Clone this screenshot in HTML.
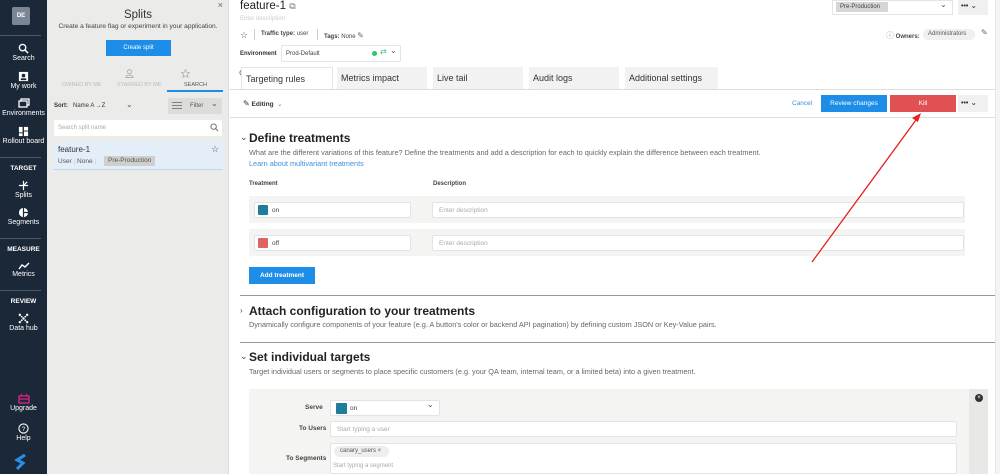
<!DOCTYPE html>
<html><head><meta charset="utf-8"><style>
*{box-sizing:border-box;margin:0;padding:0}
body{width:1000px;height:474px;overflow:hidden;position:relative;font-family:"Liberation Sans",sans-serif;background:#fff;color:#333;white-space:nowrap}
.a{position:absolute}
.nav{left:0;top:0;width:47px;height:474px;background:#1b2838}
.ni{position:absolute;left:0;width:47px;text-align:center;color:#fff;font-size:7px}
.ni svg{display:block;margin:0 auto 1px}
.sec{position:absolute;left:0;width:47px;text-align:center;color:#fff;font-size:6.5px;font-weight:bold}
.hr{position:absolute;left:0;width:41px;height:1px;background:#4a5868}
.panel{left:47px;top:0;width:182px;height:474px;background:#ebebea;border-right:1px solid #ddd}
.tab{position:absolute;top:67px;height:22px;background:#f2f2f2;font-size:9px;padding:6px 4px;color:#333}
.line{position:absolute;left:230px;width:765px;height:1px;background:#ddd}
.btn{position:absolute;color:#fff;font-size:6.5px;text-align:center}
.h2{position:absolute;font-size:12px;font-weight:bold;color:#222}
.desc{position:absolute;font-size:7.3px;color:#666}
.inp{position:absolute;background:#fff;border:1px solid #e3e3e3;border-radius:2px;font-size:6.5px;color:#aaa;padding:0 6px}
.row{position:absolute;left:249px;width:716px;height:27px;background:#f4f4f3}
</style></head><body>
<div class="a nav">
 <div class="a" style="left:12px;top:7px;width:18px;height:18px;background:#7b8694;border-radius:2px;color:#fff;font-size:6px;font-weight:bold;text-align:center;line-height:18px">DE</div>
 <div class="hr" style="top:35px"></div>
 <div class="ni" style="top:43px"><svg width="11" height="11" viewBox="0 0 12 12"><circle cx="5" cy="5" r="3.5" fill="none" stroke="#fff" stroke-width="1.5"/><path d="M7.5 7.5L11 11" stroke="#fff" stroke-width="1.6"/></svg>Search</div>
 <div class="ni" style="top:71px"><svg width="11" height="11" viewBox="0 0 12 12"><rect x="1" y="1" width="10" height="10" fill="#fff"/><circle cx="6" cy="5" r="2" fill="#1b2838"/><rect x="3" y="8" width="6" height="2" fill="#1b2838"/></svg>My work</div>
 <div class="ni" style="top:98px"><svg width="12" height="11" viewBox="0 0 12 11"><rect x="3" y="1" width="8" height="6" fill="none" stroke="#fff" stroke-width="1.3"/><rect x="1" y="3" width="8" height="6" fill="#1b2838" stroke="#fff" stroke-width="1.3"/></svg>Environments</div>
 <div class="ni" style="top:126px"><svg width="11" height="11" viewBox="0 0 12 12"><rect x="1" y="1" width="4" height="6" fill="#fff"/><rect x="6.5" y="1" width="4.5" height="4" fill="#fff"/><rect x="1" y="8" width="4" height="3" fill="#fff"/><rect x="6.5" y="6" width="4.5" height="5" fill="#fff"/></svg>Rollout board</div>
 <div class="hr" style="top:157px"></div>
 <div class="sec" style="top:165px">TARGET</div>
 <div class="ni" style="top:180px"><svg width="11" height="11" viewBox="0 0 12 12"><path d="M1 6H11M6 1V11M6 6L10 2" stroke="#fff" stroke-width="1.3" fill="none"/></svg>Splits</div>
 <div class="ni" style="top:207px"><svg width="11" height="11" viewBox="0 0 12 12"><circle cx="6" cy="6" r="5" fill="#fff"/><path d="M6 1V11M6 6H11" stroke="#1b2838" stroke-width="1.3"/></svg>Segments</div>
 <div class="hr" style="top:238px"></div>
 <div class="sec" style="top:246px">MEASURE</div>
 <div class="ni" style="top:262px"><svg width="12" height="8" viewBox="0 0 12 8"><path d="M1 7L4 3L7 5L11 1" stroke="#fff" stroke-width="1.4" fill="none"/></svg>Metrics</div>
 <div class="hr" style="top:290px"></div>
 <div class="sec" style="top:298px">REVIEW</div>
 <div class="ni" style="top:313px"><svg width="11" height="11" viewBox="0 0 12 12" fill="#fff"><circle cx="2" cy="2" r="1.3"/><circle cx="10" cy="2" r="1.3"/><circle cx="6" cy="6" r="1.3"/><circle cx="2" cy="10" r="1.3"/><circle cx="10" cy="10" r="1.3"/><circle cx="4" cy="4" r="1"/><circle cx="8" cy="8" r="1"/><circle cx="8" cy="4" r="1"/><circle cx="4" cy="8" r="1"/></svg>Data hub</div>
 <div class="ni" style="top:393px"><svg width="12" height="11" viewBox="0 0 12 11"><rect x="1" y="3" width="10" height="7" fill="none" stroke="#e0218a" stroke-width="1.3"/><path d="M1 6H11M4 3L3 1M8 3L9 1" stroke="#e0218a" stroke-width="1.2"/></svg>Upgrade</div>
 <div class="ni" style="top:423px"><svg width="11" height="11" viewBox="0 0 12 12"><circle cx="6" cy="6" r="5" fill="none" stroke="#fff" stroke-width="1.2"/><text x="6" y="8.5" font-size="7" fill="#fff" text-anchor="middle" font-family="Liberation Sans">?</text></svg>Help</div>
 <svg class="a" style="left:14px;top:454px" width="14" height="16" viewBox="0 0 14 16"><path d="M11 1L3 6L9 9L3 15" stroke="#2a8fe8" stroke-width="3" fill="none"/></svg>
</div>
<div class="a panel">
 <div class="a" style="right:5px;top:0;font-size:9px;color:#666">×</div>
 <div class="a" style="left:0;width:182px;top:9px;text-align:center;font-size:11.5px;color:#333">Splits</div>
 <div class="a" style="left:0;width:182px;top:23px;text-align:center;font-size:6.6px;color:#444">Create a feature flag or experiment in your application.</div>
 <div class="btn" style="left:59px;top:40px;width:65px;height:16px;background:#1d8de8;line-height:16px;font-size:6px">Create split</div>
 <svg class="a" style="left:78px;top:69px" width="9" height="9" viewBox="0 0 10 10"><circle cx="5" cy="3" r="2.2" fill="none" stroke="#aaa"/><path d="M1 9.5C1 6 9 6 9 9.5Z" fill="none" stroke="#aaa"/></svg>
 <svg class="a" style="left:134px;top:69px" width="9" height="9" viewBox="0 0 10 10"><path d="M5 0.5L6.3 3.7L9.5 3.9L7 6L7.8 9.3L5 7.5L2.2 9.3L3 6L0.5 3.9L3.7 3.7Z" fill="none" stroke="#aaa" stroke-width=".8"/></svg>
 <svg class="a" style="left:192px;top:69px" width="9" height="9" viewBox="0 0 10 10"><circle cx="4" cy="4" r="3" fill="none" stroke="#777"/><path d="M6.2 6.2L9 9" stroke="#777"/></svg>
 <div class="a" style="left:15px;top:82px;font-size:5.5px;color:#bbb">OWNED BY ME</div>
 <div class="a" style="left:70px;top:82px;font-size:5.5px;color:#bbb">STARRED BY ME</div>
 <div class="a" style="left:137px;top:82px;font-size:5.5px;color:#555">SEARCH</div>
 <div class="a" style="left:120px;top:90px;width:56px;height:2px;background:#1d8de8"></div>
 <div class="a" style="left:7px;top:103px;font-size:6px;color:#333"><b>Sort:</b>&nbsp;&nbsp;&nbsp;Name A →Z</div>
 <div class="a" style="left:79px;top:100px;font-size:8px;color:#555">⌄</div>
 <div class="a" style="left:121px;top:98px;width:54px;height:16px;background:#dcdcdb;font-size:6px;color:#555;padding:5px 0 0 22px">Filter</div>
 <svg class="a" style="left:125px;top:101px" width="10" height="9" viewBox="0 0 10 9"><path d="M0 1.5H10M0 4.5H10M0 7.5H10" stroke="#666" stroke-width=".8"/></svg>
 <div class="a" style="left:164px;top:99px;font-size:8px;color:#555">⌄</div>
 <div class="a" style="left:7px;top:120px;width:168px;height:16px;background:#fff;font-size:6px;color:#aaa;padding:5px 4px">Search split name</div>
 <svg class="a" style="left:163px;top:123px" width="9" height="9" viewBox="0 0 10 10"><circle cx="4" cy="4" r="3" fill="none" stroke="#666"/><path d="M6.2 6.2L9 9" stroke="#666"/></svg>
 <div class="a" style="left:6px;top:142px;width:170px;height:28px;background:#e3eef9;border-bottom:1px solid #bcd7ef"></div>
 <div class="a" style="left:11px;top:145px;font-size:8px;color:#333">feature-1</div>
 <div class="a" style="left:164px;top:144px;font-size:9px;color:#555">☆</div>
 <div class="a" style="left:11px;top:158px;font-size:6.5px;color:#555">User <span style="color:#ccc">|</span> None <span style="color:#ccc">|</span></div>
 <div class="a" style="left:57px;top:156px;width:51px;height:10px;background:#cfcfcf;font-size:6.5px;color:#555;padding:1px 4px">Pre-Production</div>
</div>
<!-- main -->
<div class="a" style="left:240px;top:0;font-size:11.5px;color:#222">feature-1 <span style="font-size:9px;color:#777">⧉</span></div>
<div class="a" style="left:240px;top:16px;font-size:6px;color:#ccc">Enter description</div>
<div class="a" style="left:240px;top:30px;font-size:9px;color:#555">☆</div>
<div class="a" style="left:254px;top:29px;width:1px;height:11px;background:#ccc"></div>
<div class="a" style="left:261px;top:31px;font-size:6px;color:#444"><b>Traffic type:</b> user</div>
<div class="a" style="left:317px;top:29px;width:1px;height:11px;background:#ccc"></div>
<div class="a" style="left:324px;top:31px;font-size:6px;color:#444"><b>Tags:</b> None <span style="font-size:8px;color:#666">✎</span></div>
<div class="a" style="left:240px;top:51px;font-size:6px;color:#333;font-weight:bold">Environment</div>
<div class="a" style="left:281px;top:45px;width:120px;height:17px;border:1px solid #e4e4e4;border-radius:2px;font-size:6px;color:#444;padding:5px 4px">Prod-Default</div>
<div class="a" style="left:372px;top:51px;width:5px;height:5px;border-radius:50%;background:#2ec66b"></div>
<div class="a" style="left:380px;top:47px;font-size:8px;color:#2ec66b">⇄</div>
<div class="a" style="left:390px;top:46px;font-size:8px;color:#555">⌄</div>
<div class="a" style="left:832px;top:0;width:121px;height:15px;border:1px solid #e4e4e4;background:#fff"></div>
<div class="a" style="left:836px;top:2px;width:52px;height:10px;background:#d6d6d6;font-size:6px;color:#444;padding:1.5px 4px">Pre-Production</div>
<div class="a" style="left:940px;top:0;font-size:8px;color:#555">⌄</div>
<div class="a" style="left:958px;top:0;width:30px;height:15px;background:#f0f0f0;font-size:7px;color:#333;padding:1px 3px"><b>•••</b> <span style="font-size:8px">⌄</span></div>
<div class="a" style="left:886px;top:30px;font-size:6px;color:#444"><span style="color:#999;font-size:8px">ⓘ</span> <b>Owners:</b></div>
<div class="a" style="left:923px;top:29px;width:52px;height:11px;background:#f0f0f0;border-radius:5px;font-size:6px;color:#555;padding:2px 5px">Administrators</div>
<div class="a" style="left:981px;top:28px;font-size:8px;color:#666">✎</div>
<div class="tab" style="left:241px;width:92px;background:#fff;border:1px solid #e4e4e4;border-bottom:none;height:23px">Targeting rules</div>
<div class="tab" style="left:337px;width:90px">Metrics impact</div>
<div class="tab" style="left:433px;width:90px">Live tail</div>
<div class="tab" style="left:529px;width:90px">Audit logs</div>
<div class="tab" style="left:625px;width:93px">Additional settings</div>
<div class="line" style="top:89px"></div>
<div class="a" style="left:243px;top:99px;font-size:6.5px;color:#333"><span style="font-size:8px">✎</span> <b>Editing</b> &nbsp;<span style="color:#777">⌄</span></div>
<div class="a" style="left:792px;top:100px;font-size:6.5px;color:#3b8fe0">Cancel</div>
<div class="btn" style="left:821px;top:95px;width:66px;height:17px;background:#1d8de8;line-height:17px">Review changes</div>
<div class="btn" style="left:890px;top:95px;width:66px;height:17px;background:#e05252;line-height:17px">Kill</div>
<div class="a" style="left:958px;top:95px;width:30px;height:17px;background:#f0f0f0;font-size:7px;color:#333;padding:3px 3px"><b>•••</b> <span style="font-size:8px">⌄</span></div>
<div class="line" style="top:117px"></div>
<div class="a" style="left:240px;top:132px;font-size:9px;color:#444">⌄</div>
<div class="h2" style="left:249px;top:131px">Define treatments</div>
<div class="desc" style="left:249px;top:148px">What are the different variations of this feature? Define the treatments and add a description for each to quickly explain the difference between each treatment.</div>
<div class="desc" style="left:249px;top:159px;color:#3b8fe0">Learn about multivariant treatments</div>
<div class="a" style="left:249px;top:181px;font-size:6px;font-weight:bold;color:#444">Treatment</div>
<div class="a" style="left:433px;top:181px;font-size:6px;font-weight:bold;color:#444">Description</div>
<div class="row" style="top:196px"></div>
<div class="row" style="top:229px"></div>
<div class="inp" style="left:254px;top:202px;width:157px;height:16px;color:#444;padding:4px 17px">on</div>
<div class="a" style="left:258px;top:205px;width:10px;height:10px;background:#1f7c9a;border-radius:1px"></div>
<div class="inp" style="left:432px;top:202px;width:532px;height:16px;padding-top:4px">Enter description</div>
<div class="inp" style="left:254px;top:235px;width:157px;height:16px;color:#444;padding:4px 17px">off</div>
<div class="a" style="left:258px;top:238px;width:10px;height:10px;background:#e06363;border-radius:1px"></div>
<div class="inp" style="left:432px;top:235px;width:532px;height:16px;padding-top:4px">Enter description</div>
<div class="btn" style="left:249px;top:267px;width:66px;height:17px;background:#1d8de8;line-height:17px;font-weight:bold">Add treatment</div>
<div class="a" style="left:240px;top:295px;width:755px;height:1px;background:#999"></div>
<div class="a" style="left:240px;top:306px;font-size:8px;color:#444">›</div>
<div class="h2" style="left:249px;top:304px">Attach configuration to your treatments</div>
<div class="desc" style="left:249px;top:320px">Dynamically configure components of your feature (e.g. A button's color or backend API pagination) by defining custom JSON or Key-Value pairs.</div>
<div class="a" style="left:240px;top:342px;width:755px;height:1px;background:#999"></div>
<div class="a" style="left:240px;top:351px;font-size:9px;color:#444">⌄</div>
<div class="h2" style="left:249px;top:350px">Set individual targets</div>
<div class="desc" style="left:249px;top:367px">Target individual users or segments to place specific customers (e.g. your QA team, internal team, or a limited beta) into a given treatment.</div>
<div class="a" style="left:249px;top:389px;width:739px;height:85px;background:#f4f4f3"></div>
<div class="a" style="left:969px;top:389px;width:19px;height:85px;background:#e8e8e7"></div>
<div class="a" style="left:975px;top:394px;width:8px;height:8px;border-radius:50%;background:#333;color:#fff;font-size:6px;text-align:center;line-height:8px">×</div>
<div class="a" style="left:305px;top:404px;font-size:6.5px;font-weight:bold;color:#444">Serve</div>
<div class="inp" style="left:330px;top:400px;width:110px;height:16px;color:#444;padding:4px 19px">on</div>
<div class="a" style="left:336px;top:403px;width:11px;height:11px;background:#1f7c9a;border-radius:1px"></div>
<div class="a" style="left:427px;top:400px;font-size:8px;color:#555">⌄</div>
<div class="a" style="left:299px;top:425px;font-size:6.5px;font-weight:bold;color:#444">To Users</div>
<div class="inp" style="left:330px;top:421px;width:627px;height:16px;padding-top:4px">Start typing a user</div>
<div class="a" style="left:286px;top:455px;font-size:6.5px;font-weight:bold;color:#444">To Segments</div>
<div class="inp" style="left:330px;top:443px;width:627px;height:31px"></div>
<div class="a" style="left:334px;top:446px;width:55px;height:11px;background:#eee;border-radius:6px;font-size:6px;color:#555;padding:2px 6px">canary_users ×</div>
<div class="a" style="left:333px;top:463px;font-size:6px;color:#aaa">Start typing a segment</div>
<div class="a" style="left:995px;top:0;width:5px;height:474px;background:#f4f4f4;border-left:1px solid #e6e6e6"></div>
<svg class="a" style="left:0;top:0" width="1000" height="474"><line x1="812" y1="262" x2="916" y2="120" stroke="#e8201e" stroke-width="1.3"/><path d="M921 113L912 118L918 122Z" fill="#e8201e"/></svg>
</body></html>
